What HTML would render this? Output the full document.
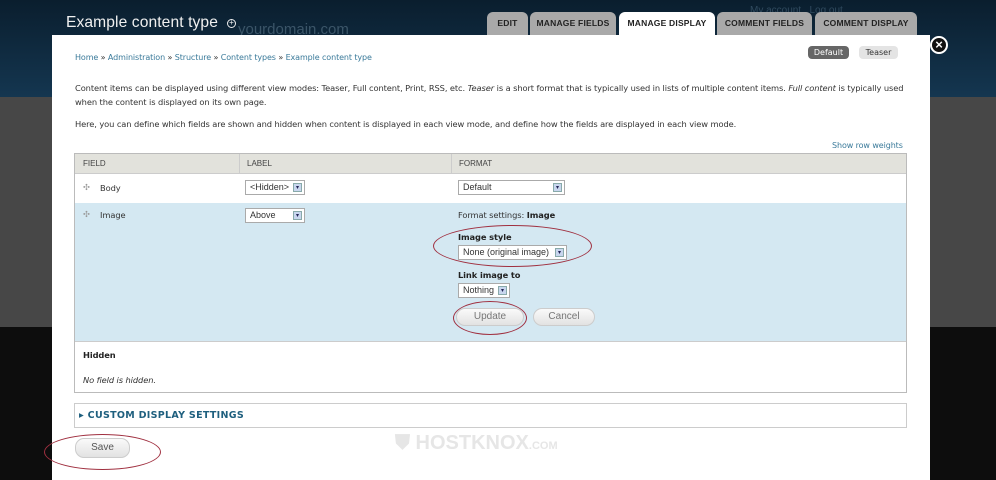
<!DOCTYPE html>
<html><head><meta charset="utf-8"><style>
*{margin:0;padding:0;box-sizing:border-box}
body{width:996px;height:480px;overflow:hidden;position:relative;font-family:"Liberation Sans","DejaVu Sans",sans-serif;font-size:9px;color:#333;background:#0d0d0d}
.top{position:absolute;left:0;top:0;width:996px;height:97px;background:linear-gradient(#0a1e2e,#143650)}
.gray{position:absolute;left:0;top:97px;width:996px;height:230px;background:#474747}
.title{position:absolute;left:66px;top:14px;color:#f0f0f0;font-size:15.6px;font-family:"Liberation Sans",sans-serif;letter-spacing:0.1px}
.plus{position:absolute;left:227px;top:19px;width:9px;height:9px;border:1.5px solid #eee;border-radius:50%;color:#eee;font-size:8px;line-height:6px;text-align:center}
.wm{position:absolute;left:238px;top:21px;color:#3b5568;font-size:15px}
.acct{position:absolute;left:750px;top:5px;color:#304a5e;font-size:10px}
.tab{position:absolute;top:12px;height:23px;background:#a9a9a9;border-radius:6px 6px 0 0;font-size:8.5px;font-weight:bold;color:#222;text-align:center;line-height:23px;font-family:"Liberation Sans",sans-serif;letter-spacing:0.2px}
.panel{position:absolute;left:52px;top:35px;width:878px;height:445px;background:#fff}
.close{position:absolute;left:930px;top:36px;width:18px;height:18px;border-radius:50%;background:#111;border:2px solid #fff;color:#fff;font-size:13px;line-height:13px;text-align:center;font-weight:bold}
.p{position:absolute;left:75px;font-size:8.3px;color:#333;font-family:"DejaVu Sans",sans-serif;letter-spacing:-0.1px;white-space:nowrap}
a{color:#3a7a9a;text-decoration:none}
.pill{position:absolute;top:46px;height:13px;border-radius:4px;font-size:8px;line-height:13px;text-align:center;font-family:"DejaVu Sans",sans-serif}
.tbl{position:absolute;left:74px;top:153px;width:833px;height:240px;border:1px solid #bbb}
.hdr{position:absolute;left:0;top:0;width:100%;height:20px;background:#e2e2dc;border-bottom:1px solid #ccc;font-size:8px;line-height:20px;color:#444}
.sel{position:absolute;height:15px;border:1px solid #aaa;background:#fff;font-size:9px;line-height:13px;padding-left:4px;color:#333}
.sel i{position:absolute;right:2px;top:2px;width:9px;height:9px;background:#c8d6ee;border:1px solid #8aa;font-style:normal;font-size:6px;line-height:8px;text-align:center;color:#225}
.btn{position:absolute;height:18px;border:1px solid #ccc;border-radius:9px;background:linear-gradient(#fafafa,#e2e2e2);font-size:10px;line-height:16px;text-align:center;color:#777}
.oval{position:absolute;border:1px solid #a03040;border-radius:50%}
.b{font-weight:bold;color:#222}
</style></head><body>
<div class="top"></div><div class="gray"></div>
<div class="title">Example content type</div>
<div class="plus">+</div>
<div class="wm">yourdomain.com</div>
<div class="acct">My account &nbsp; Log out</div>
<div class="tab" style="left:487px;width:41px">EDIT</div>
<div class="tab" style="left:530px;width:86px">MANAGE FIELDS</div>
<div class="tab" style="left:619px;width:96px;background:#fff;height:24px">MANAGE DISPLAY</div>
<div class="tab" style="left:717px;width:95px">COMMENT FIELDS</div>
<div class="tab" style="left:815px;width:102px">COMMENT DISPLAY</div>
<div class="panel"></div>
<div class="close">×</div>
<div class="p" style="top:53px;font-size:8px"><a>Home</a> » <a>Administration</a> » <a>Structure</a> » <a>Content types</a> » <a>Example content type</a></div>
<div class="pill" style="left:808px;width:41px;background:#666;color:#fff">Default</div>
<div class="pill" style="left:859px;width:39px;background:#e4e4e4;color:#333">Teaser</div>
<div class="p" style="top:83px">Content items can be displayed using different view modes: Teaser, Full content, Print, RSS, etc. <i>Teaser</i> is a short format that is typically used in lists of multiple content items. <i>Full content</i> is typically used</div>
<div class="p" style="top:97px">when the content is displayed on its own page.</div>
<div class="p" style="top:119px">Here, you can define which fields are shown and hidden when content is displayed in each view mode, and define how the fields are displayed in each view mode.</div>
<div class="p" style="top:141px;left:832px;font-size:8px"><a>Show row weights</a></div>
<div class="tbl">
<div class="hdr"><span style="position:absolute;left:8px">FIELD</span><span style="position:absolute;left:172px">LABEL</span><span style="position:absolute;left:384px">FORMAT</span><span style="position:absolute;left:164px;top:0;height:20px;border-left:1px solid #ccc"></span><span style="position:absolute;left:376px;top:0;height:20px;border-left:1px solid #ccc"></span></div>
<div style="position:absolute;left:0;top:49px;width:100%;height:138px;background:#d4e8f2"></div>
<div style="position:absolute;left:0;top:187px;width:100%;border-top:1px solid #ccc"></div>
</div>
<div class="p" style="top:182px;left:83px;color:#999">✣</div><div class="p" style="top:183px;left:100px">Body</div>
<div class="sel" style="left:245px;top:180px;width:60px">&lt;Hidden&gt;<i>▾</i></div>
<div class="sel" style="left:458px;top:180px;width:107px">Default<i>▾</i></div>
<div class="p" style="top:209px;left:83px;color:#999">✣</div><div class="p" style="top:210px;left:100px">Image</div>
<div class="sel" style="left:245px;top:208px;width:60px">Above<i>▾</i></div>
<div class="p" style="top:210px;left:458px">Format settings: <span class="b">Image</span></div>
<div class="p b" style="top:232px;left:458px">Image style</div>
<div class="sel" style="left:458px;top:245px;width:109px">None (original image)<i>▾</i></div>
<div class="p b" style="top:270px;left:458px">Link image to</div>
<div class="sel" style="left:458px;top:283px;width:52px">Nothing<i>▾</i></div>
<div class="btn" style="left:456px;top:308px;width:68px">Update</div>
<div class="btn" style="left:533px;top:308px;width:62px">Cancel</div>
<div class="oval" style="left:433px;top:225px;width:159px;height:42px"></div>
<div class="oval" style="left:453px;top:301px;width:74px;height:34px"></div>
<div class="p b" style="top:350px;left:83px">Hidden</div>
<div class="p" style="top:375px;left:83px"><i>No field is hidden.</i></div>
<div style="position:absolute;left:74px;top:403px;width:833px;height:25px;border:1px solid #ccc"></div>
<div class="p" style="top:410px;left:79px;color:#1e5f7e;font-weight:bold;font-size:9.5px;letter-spacing:0.3px">▸ CUSTOM DISPLAY SETTINGS</div>
<div style="position:absolute;left:395px;top:432px;color:#e6e6e6;font-size:20px;font-weight:bold">⛊ HOSTKNOX<span style="font-size:11px">.COM</span></div>
<div class="btn" style="left:75px;top:438px;width:55px;height:20px;line-height:18px;color:#555">Save</div>
<div class="oval" style="left:44px;top:434px;width:117px;height:36px"></div>
</body></html>
